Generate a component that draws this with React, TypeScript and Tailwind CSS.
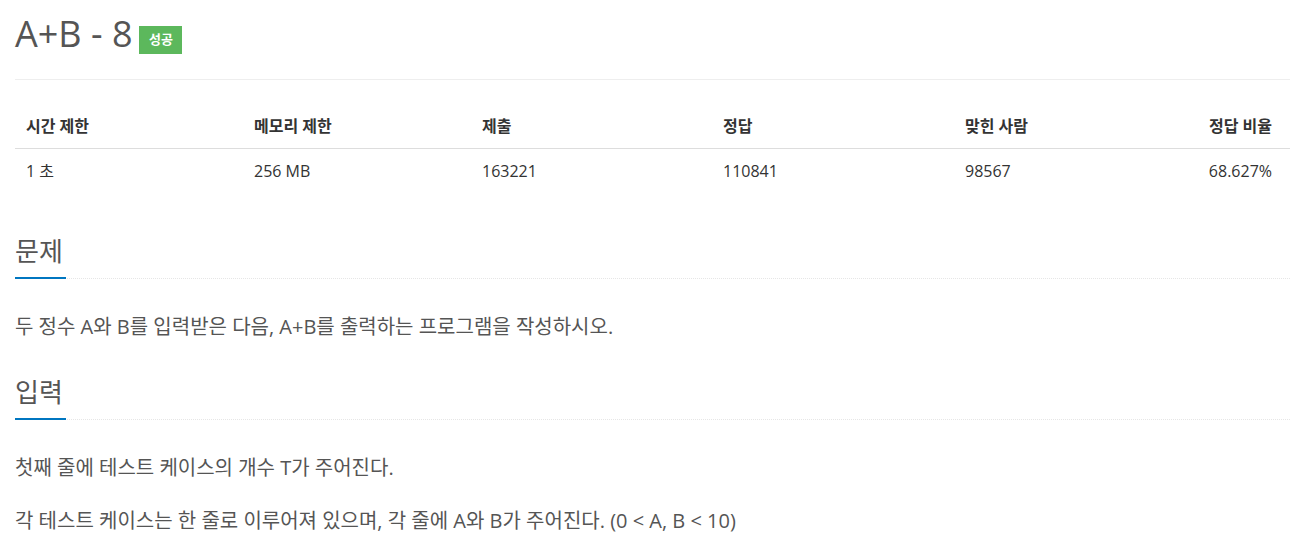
const FONT = '"Open Sans", "Noto Sans CJK KR", sans-serif';

const stats = [
  { label: "시간 제한", value: "1 초" },
  { label: "메모리 제한", value: "256 MB" },
  { label: "제출", value: "163221" },
  { label: "정답", value: "110841" },
  { label: "맞힌 사람", value: "98567" },
  { label: "정답 비율", value: "68.627%" },
];

function Section({ title, children }: { title: string; children: React.ReactNode }) {
  return (
    <section>
      <div className="flex border-b border-dotted border-[#e6e6e6]">
        <h2 className="-mb-px border-b-2 border-[#0076c0] pb-[8px] pr-[3px] text-[26px] leading-[36px] font-normal text-[#555]">
          {title}
        </h2>
      </div>
      <div className="pt-[33px] text-[20px] leading-[30px] text-[#555]">{children}</div>
    </section>
  );
}

export default function App() {
  return (
    <div className="min-h-screen bg-white pl-[15px]" style={{ fontFamily: FONT }}>
      {/* Title */}
      <div className="flex items-center gap-[7px] border-b border-[#eee] pt-[13px] pb-[25px]">
        <h1 className="text-[36px] leading-[40px] font-normal text-[#555]">A+B - 8</h1>
        <span className="mt-[13px] flex h-[28px] w-[43px] items-center justify-center bg-[#5cb85c] text-[13px] font-bold text-white">
          성공
        </span>
      </div>

      {/* Stats table */}
      <div className="mt-[24px] grid grid-cols-[228px_228px_241px_242px_1fr_1fr] text-[16px] text-[#333]">
        {stats.map((s, i) => (
          <div
            key={s.label}
            className={`flex h-[45px] items-center border-b border-[#ddd] px-[11px] font-bold ${
              i === stats.length - 1 ? "justify-end pr-[18px]" : ""
            }`}
          >
            {s.label}
          </div>
        ))}
        {stats.map((s, i) => (
          <div
            key={s.value}
            className={`flex h-[43px] items-center px-[11px] ${
              i === stats.length - 1 ? "justify-end pr-[18px]" : ""
            }`}
          >
            {s.value}
          </div>
        ))}
      </div>

      <div className="mt-[41px]">
        <Section title="문제">
          <p>두 정수 A와 B를 입력받은 다음, A+B를 출력하는 프로그램을 작성하시오.</p>
        </Section>
      </div>

      <div className="mt-[32px]">
        <Section title="입력">
          <p className="mb-[23px]">첫째 줄에 테스트 케이스의 개수 T가 주어진다.</p>
          <p>각 테스트 케이스는 한 줄로 이루어져 있으며, 각 줄에 A와 B가 주어진다. (0 &lt; A, B &lt; 10)</p>
        </Section>
      </div>
    </div>
  );
}
